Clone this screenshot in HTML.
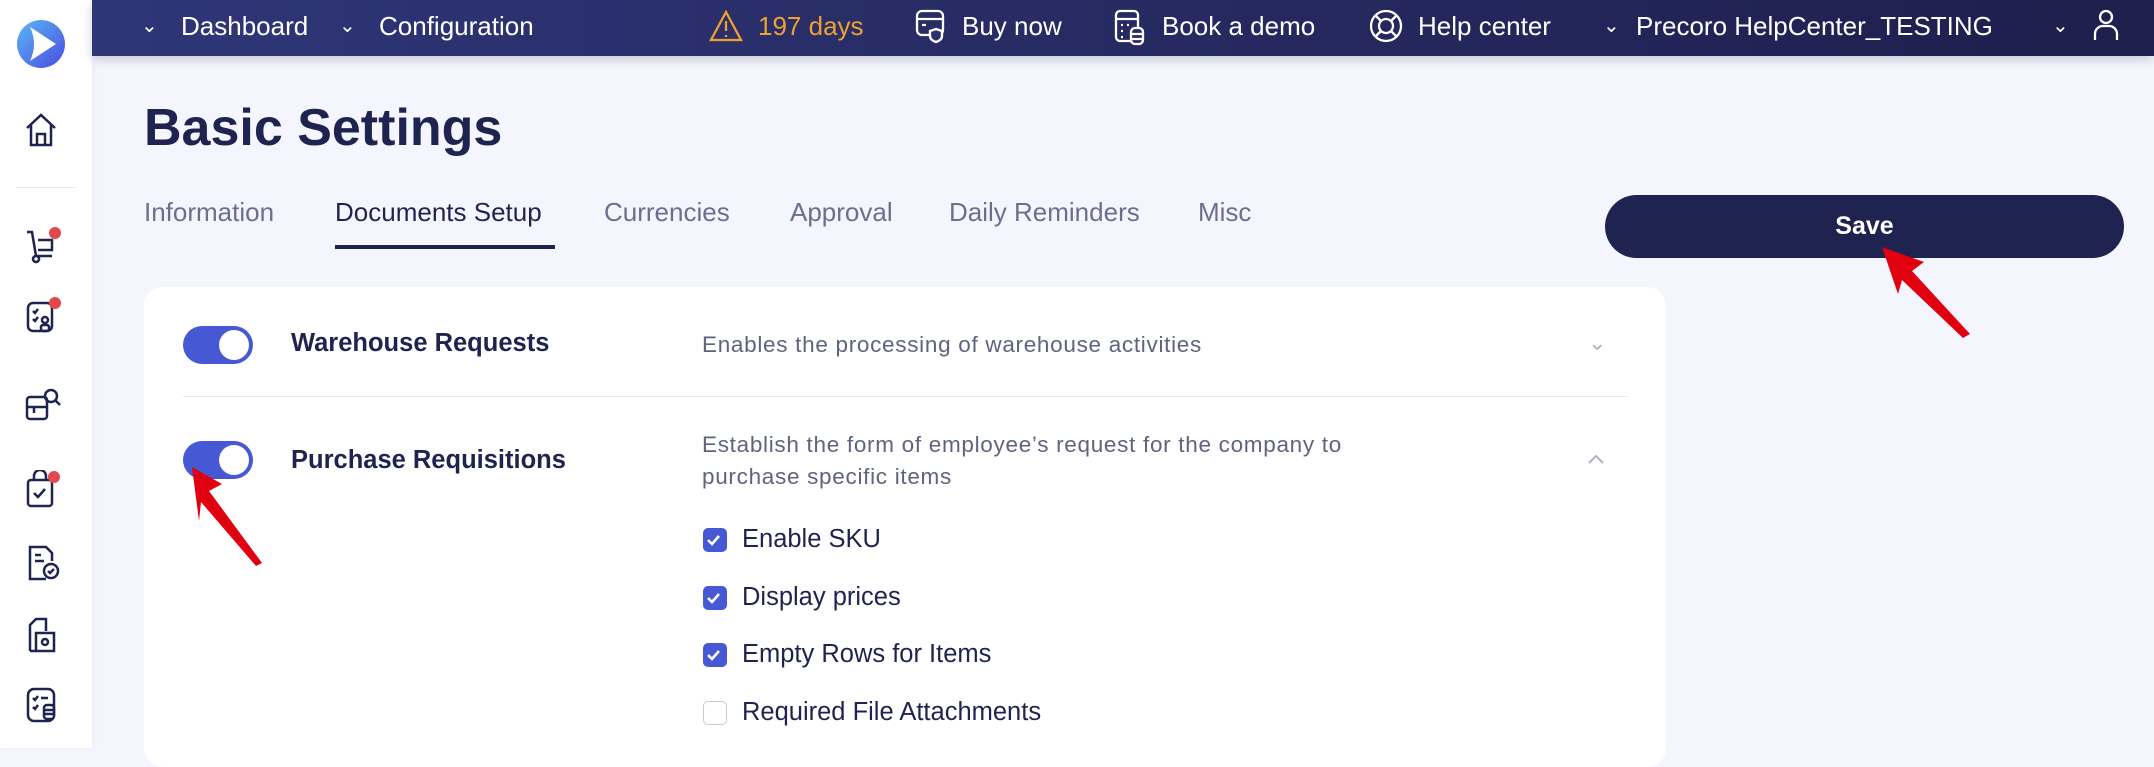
<!DOCTYPE html>
<html><head><meta charset="utf-8"><style>
*{margin:0;padding:0;box-sizing:border-box}
body{width:2154px;height:748px;overflow:hidden;background:#f5f6fd;font-family:"Liberation Sans",sans-serif;position:relative;color:#1f2350}
.a{position:absolute;white-space:nowrap}
#side{left:0;top:0;width:92px;height:748px;background:#fff;box-shadow:2px 0 6px rgba(0,0,0,.04)}
#top{left:92px;top:0;width:2062px;height:56px;background:linear-gradient(90deg,#2f3678,#1d1f4c);box-shadow:0 4px 10px rgba(30,32,80,.2)}
.tt{color:#fff;font-size:26px;top:11px}
.chev{top:13px;color:#fff;font-size:20px}
.tab{top:197px;font-size:26px;color:#6b6f8d}
.lbl{font-size:25.5px;font-weight:bold;color:#1f2350}
.desc{font-size:22.5px;letter-spacing:0.7px;color:#5f6380;line-height:32px}
.tog{width:70px;height:38px;border-radius:19px;background:#4758d4}
.tog:after{content:"";position:absolute;right:4px;top:4px;width:30px;height:30px;border-radius:50%;background:#fff}
.cb{left:703px;width:24px;height:24px;border-radius:5px;background:#4758d4}
.cbt{left:742px;font-size:25.5px;color:#1f2350}
.ic{position:absolute;left:24px}
</style></head><body>
<div class="a" id="side"></div>
<svg class="a" style="left:16px;top:19px" width="50" height="50" viewBox="0 0 50 50"><defs><linearGradient id="g" x1="0" y1="0" x2="1" y2="1"><stop offset="0" stop-color="#5ab8f5"/><stop offset="1" stop-color="#4a4be0"/></linearGradient></defs><circle cx="25" cy="25" r="24" fill="url(#g)"/><path d="M14 8 L40 25 L14 42 Q22 25 14 8Z" fill="#fff"/></svg>
<svg class="ic" style="top:112px" width="34" height="36" viewBox="0 0 34 36" fill="none" stroke="#1f2350" stroke-width="2.5"><path d="M3 16 L17 3 L31 16 M7 12 V33 H27 V12 M13 33 V22 H21 V33"/></svg>
<div class="a" style="left:16px;top:187px;width:60px;height:1px;background:#e4e6f0"></div>
<svg class="ic" style="top:226px" width="40" height="40" viewBox="0 0 40 40" fill="none" stroke="#1f2350" stroke-width="2.5"><path d="M3 6 H8 L12 30 H28 M14 14 H28 V24 H14 M12 30 a3 3 0 1 0 .1 0"/><circle cx="31" cy="7" r="6" fill="#e5484d" stroke="none"/></svg>
<svg class="ic" style="top:296px" width="40" height="40" viewBox="0 0 40 40" fill="none" stroke="#1f2350" stroke-width="2.5"><rect x="4" y="7" width="24" height="28" rx="5"/><path d="M9 15l2 2 3-4 M9 23l2 2 3-4"/><circle cx="21" cy="24" r="3"/><rect x="17" y="29" width="8" height="6" rx="2"/><circle cx="31" cy="7" r="6" fill="#e5484d" stroke="none"/></svg>
<svg class="ic" style="top:385px" width="40" height="40" viewBox="0 0 40 40" fill="none" stroke="#1f2350" stroke-width="2.5"><rect x="3" y="12" width="20" height="22" rx="3"/><path d="M3 22 H23 M10 22 V28"/><circle cx="27" cy="11" r="6"/><path d="M31 15 L36 20"/></svg>
<svg class="ic" style="top:470px" width="40" height="40" viewBox="0 0 40 40" fill="none" stroke="#1f2350" stroke-width="2.5"><rect x="4" y="10" width="24" height="26" rx="3"/><path d="M10 10 V6 a6 6 0 0 1 12 0 V10 M10 23l4 4 7-8"/><circle cx="30" cy="7" r="6" fill="#e5484d" stroke="none"/></svg>
<svg class="ic" style="top:543px" width="40" height="40" viewBox="0 0 40 40" fill="none" stroke="#1f2350" stroke-width="2.5"><path d="M22 36 H6 V4 H22 L28 10 V18 M11 12 H17 M11 18 H20"/><circle cx="27" cy="28" r="7"/><path d="M24 28l2 2 4-4"/></svg>
<svg class="ic" style="top:615px" width="40" height="40" viewBox="0 0 40 40" fill="none" stroke="#1f2350" stroke-width="2.5"><path d="M6 36 V10 L12 4 H22 V16 M6 36 H30 V18 H12 V36"/><circle cx="21" cy="27" r="3"/></svg>
<svg class="ic" style="top:685px" width="40" height="40" viewBox="0 0 40 40" fill="none" stroke="#1f2350" stroke-width="2.5"><rect x="4" y="4" width="26" height="32" rx="6"/><path d="M9 13l2 2 3-4 M17 13 H24 M9 22l2 2 3-4"/><rect x="20" y="20" width="10" height="14" rx="3" fill="#fff"/><path d="M20 25 H30 M20 29 H30"/></svg>

<div class="a" id="top"></div>
<div class="a chev" style="left:141px">⌄</div><div class="a tt" style="left:181px">Dashboard</div>
<div class="a chev" style="left:339px">⌄</div><div class="a tt" style="left:379px">Configuration</div>
<svg class="a" style="left:709px;top:9px" width="34" height="34" viewBox="0 0 34 34" fill="none" stroke="#f0a030" stroke-width="2.3"><path d="M17 3 L32 31 H2Z M17 12 V22 M17 26 V28"/></svg>
<div class="a tt" style="left:758px;color:#f0a030">197 days</div>
<svg class="a" style="left:914px;top:8px" width="34" height="36" viewBox="0 0 34 36" fill="none" stroke="#fff" stroke-width="2.3"><rect x="3" y="3" width="26" height="24" rx="5"/><path d="M3 11 H29 M8 17 H12"/><path d="M22 21 l6 2 v5 q0 4 -6 6 q-6 -2 -6 -6 v-5z" fill="#2b306e"/></svg>
<div class="a tt" style="left:962px">Buy now</div>
<svg class="a" style="left:1113px;top:8px" width="34" height="38" viewBox="0 0 34 38" fill="none" stroke="#fff" stroke-width="2.3"><rect x="3" y="3" width="22" height="30" rx="4"/><path d="M3 11 H25 M8 17h2 M14 17h2 M8 23h2 M8 29h2"/><rect x="18" y="20" width="12" height="16" rx="4" fill="#262a63"/><path d="M18 26H30M18 31H30"/></svg>
<div class="a tt" style="left:1162px">Book a demo</div>
<svg class="a" style="left:1368px;top:8px" width="36" height="36" viewBox="0 0 36 36" fill="none" stroke="#fff" stroke-width="2.3"><circle cx="18" cy="18" r="15"/><circle cx="18" cy="18" r="7"/><path d="M8 8l5 5M28 8l-5 5M8 28l5-5M28 28l-5-5"/></svg>
<div class="a tt" style="left:1418px">Help center</div>
<div class="a chev" style="left:1603px">⌄</div><div class="a tt" style="left:1636px">Precoro HelpCenter_TESTING</div>
<div class="a chev" style="left:2052px">⌄</div>
<svg class="a" style="left:2092px;top:8px" width="28" height="34" viewBox="0 0 28 34" fill="none" stroke="#fff" stroke-width="2.3"><circle cx="14" cy="9" r="6"/><path d="M3 32 V26 a8 8 0 0 1 8-8 h6 a8 8 0 0 1 8 8 V32"/></svg>

<div class="a" style="left:144px;top:98px;font-size:52px;font-weight:bold;color:#1f2350">Basic Settings</div>
<div class="a tab" style="left:144px">Information</div>
<div class="a tab" style="left:335px;color:#1f2350">Documents Setup</div>
<div class="a" style="left:335px;top:245px;width:220px;height:4px;background:#1f2350"></div>
<div class="a tab" style="left:604px">Currencies</div>
<div class="a tab" style="left:790px">Approval</div>
<div class="a tab" style="left:949px">Daily Reminders</div>
<div class="a tab" style="left:1198px">Misc</div>
<div class="a" style="left:1605px;top:195px;width:519px;height:63px;border-radius:32px;background:#1f2350;color:#fff;font-size:25px;font-weight:bold;text-align:center;line-height:63px">Save</div>

<div class="a" style="left:144px;top:287px;width:1522px;height:480px;border-radius:19px;background:#fff"></div>
<div class="a tog" style="left:183px;top:326px"></div>
<div class="a lbl" style="left:291px;top:329px">Warehouse Requests</div>
<div class="a desc" style="left:702px;top:329px">Enables the processing of warehouse activities</div>
<div class="a" style="left:1588px;top:330px;color:#b0b3c8;font-size:22px">⌄</div>
<div class="a" style="left:183px;top:396px;width:1445px;height:1px;background:#e6e8f0"></div>
<div class="a tog" style="left:183px;top:441px"></div>
<div class="a lbl" style="left:291px;top:446px">Purchase Requisitions</div>
<div class="a desc" style="left:702px;top:429px">Establish the form of employee’s request for the company to<br>purchase specific items</div>
<svg class="a" style="left:1587px;top:453px" width="18" height="12" viewBox="0 0 18 12" fill="none" stroke="#b0b3c8" stroke-width="2"><path d="M2 10l7-7 7 7"/></svg>
<div class="a cb" style="top:528px"></div><div class="a cbt" style="top:525px">Enable SKU</div>
<div class="a cb" style="top:586px"></div><div class="a cbt" style="top:583px">Display prices</div>
<div class="a cb" style="top:643px"></div><div class="a cbt" style="top:640px">Empty Rows for Items</div>
<div class="a cb" style="top:701px;background:#fff;border:1.5px solid #c8cad8"></div><div class="a cbt" style="top:698px">Required File Attachments</div>
<svg class="a" style="left:700px;top:520px" width="30" height="200" viewBox="0 0 30 200" fill="none" stroke="#fff" stroke-width="2.6"><path d="M8 20l4 4 7-8 M8 78l4 4 7-8 M8 135l4 4 7-8"/></svg>

<svg class="a" style="left:0;top:0" width="2154" height="748" viewBox="0 0 2154 748"><path d="M1882 247 L1924 262 L1912 271 L1970 334 L1963 338 L1902 280 L1898 294Z" fill="#e00010"/><path d="M192 467 L222 484 L209 491 L262 563 L256 566 L201 502 L199 521Z" fill="#e00010"/></svg>
</body></html>
